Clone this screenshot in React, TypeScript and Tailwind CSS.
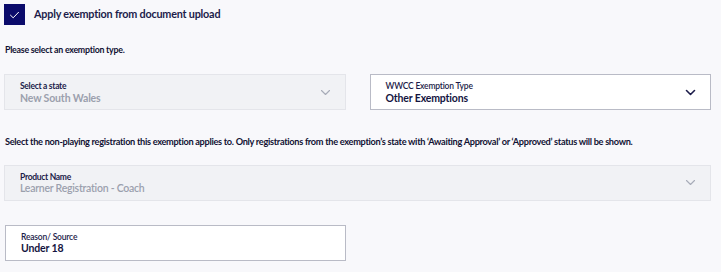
import React from 'react';

const Chevron: React.FC<{ muted?: boolean }> = ({ muted }) => (
    <svg width="11" height="7" viewBox="0 0 11 7" fill="none" className={muted ? 'text-[#a8acb8]' : 'text-[#1c1c4a]'}>
        <path d="M1.5 1.5 L5.5 5.5 L9.5 1.5" stroke="currentColor" strokeWidth={muted ? 1.1 : 1.6} strokeLinecap="round" strokeLinejoin="round" />
    </svg>
);

interface FieldProps {
    label: string;
    value: string;
    disabled?: boolean;
    select?: boolean;
    boldLabel?: boolean;
    lightValue?: boolean;
    className?: string;
}

const Field: React.FC<FieldProps> = ({ label, value, disabled, select, boldLabel, lightValue, className }) => (
    <div
        className={`h-[36px] flex items-center justify-between pl-[15px] pr-[14px] border ${
            disabled ? 'bg-[#f1f2f5] border-[#e4e5ea]' : 'bg-white border-[#b9bbc6]'
        } ${className ?? ''}`}
    >
        <div className="flex flex-col leading-none pt-[1px]">
            <span className={`text-[8.5px] ${boldLabel ? 'font-bold tracking-[-0.3px]' : 'font-semibold tracking-[-0.2px]'} text-[#1c1c4a]`}>{label}</span>
            <span
                className={`mt-[2px] text-[10.5px] ${lightValue ? 'font-semibold tracking-[-0.25px]' : 'font-bold tracking-[-0.15px]'} ${
                    disabled ? 'text-[#9ba0ad]' : 'text-[#14143f]'
                }`}
            >
                {value}
            </span>
        </div>
        {select && <Chevron muted={disabled} />}
    </div>
);

export default function App() {
    return (
        <div className="w-[721px] h-[272px] bg-[#f8f8fb] pl-[4px] pr-[10px] pt-[4px] font-['Lato',sans-serif] text-[#1c1c4a] overflow-hidden">
            <div className="flex items-center gap-[9px]">
                <div className="w-[21px] h-[21px] bg-[#0b0b6b] flex items-center justify-center">
                    <svg width="11" height="8" viewBox="0 0 11 8" fill="none">
                        <path d="M1.5 4.2 L4.2 6.8 L9.5 1.3" stroke="white" strokeWidth="1" strokeLinecap="round" strokeLinejoin="round" />
                    </svg>
                </div>
                <span className="text-[10.8px] font-bold tracking-[-0.2px] text-[#1c1c4a]">Apply exemption from document upload</span>
            </div>

            <p className="mt-[18px] pl-[1px] text-[8.8px] font-bold tracking-[-0.25px] text-[#111133]">Please select an exemption type.</p>

            <div className="mt-[18px] grid grid-cols-2 gap-[24px]">
                <Field label="Select a state" value="New South Wales" disabled select boldLabel />
                <Field label="WWCC Exemption Type" value="Other Exemptions" select />
            </div>

            <p className="mt-[25px] pl-[1px] text-[9.2px] font-bold tracking-[-0.3px] text-[#111133]">
                Select the non-playing registration this exemption applies to. Only registrations from the exemption’s state with ‘Awaiting Approval’ or ‘Approved’ status will be shown.
            </p>

            <Field className="mt-[16px]" label="Product Name" value="Learner Registration - Coach" disabled select boldLabel lightValue />

            <div className="mt-[24px] pl-[1px] w-[342px]">
                <Field label="Reason/ Source" value="Under 18" />
            </div>
        </div>
    );
}
